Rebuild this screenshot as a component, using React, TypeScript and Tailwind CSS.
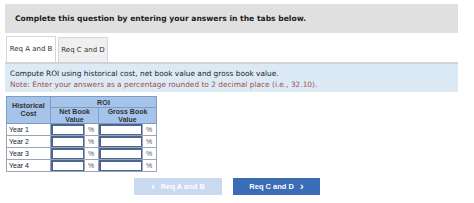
import React from "react";

const rows = ["Year 1", "Year 2", "Year 3", "Year 4"];

export default function App() {
  return (
    <div className="h-[203px] w-[474px] bg-white font-['DejaVu_Sans',sans-serif]">
      <div className="px-[5px] pt-[4px]">
        <div className="flex h-[29px] w-[453px] items-center bg-[#e0e0e0] pl-[10px] text-[7.6px] font-bold text-[#222]">
          Complete this question by entering your answers in the tabs below.
        </div>

        <div className="mt-[3px] flex h-[26px] items-end gap-[2px] pl-px">
          <div className="flex h-[26px] w-[50px] items-center justify-center border border-b-0 border-[#d6d6d6] bg-white text-[7px] text-[#333]">
            Req A and B
          </div>
          <div className="flex h-[25px] w-[50px] items-center justify-center border border-b-0 border-[#d6d6d6] bg-[#f0f0f0] text-[7px] text-[#333]">
            Req C and D
          </div>
        </div>

        <div className="h-[30px] w-[453px] border-t-2 border-[#cfd4d9] bg-[#dceaf6] pl-[5px] pt-[4px] text-[7.4px] leading-[11px]">
          <div className="text-[#222]">Compute ROI using historical cost, net book value and gross book value.</div>
          <div className="text-[#a0504a]">Note: Enter your answers as a percentage rounded to 2 decimal place (i.e., 32.10).</div>
        </div>

        <table className="mt-[4px] ml-px border-collapse font-['Liberation_Sans',sans-serif] text-[7px] text-[#222]">
          <thead>
            <tr className="h-[11px]">
              <th rowSpan={2} className="w-[44px] border border-[#7f9cc6] bg-[#a6c4ea] text-[7.2px] font-bold leading-[8px] text-[#333]">
                Historical
                <br />
                Cost
              </th>
              <th colSpan={4} className="border border-[#7f9cc6] bg-[#a6c4ea] text-[7.2px] font-bold leading-[9px] text-[#333]">
                ROI
              </th>
            </tr>
            <tr className="h-[14px]">
              <th colSpan={2} className="border border-[#7f9cc6] bg-[#a6c4ea] text-[7px] font-bold leading-[7.5px] text-[#333]">
                Net Book
                <br />
                Value
              </th>
              <th colSpan={2} className="border border-[#7f9cc6] bg-[#a6c4ea] text-[7px] font-bold leading-[7.5px] text-[#333]">
                Gross Book
                <br />
                Value
              </th>
            </tr>
          </thead>
          <tbody>
            {rows.map((r) => (
              <tr key={r} className="h-[12px]">
                <td className="border border-[#9aa6b8] pl-[2px] leading-[10px]">{r}</td>
                <td className="w-[34px] border border-[#9aa6b8] p-0">
                  <div className="h-[11px] border border-t-2 border-l-2 border-[#4d6591] bg-white" />
                </td>
                <td className="w-[14px] border border-[#9aa6b8] pl-[3px] text-[7px] leading-[10px] text-[#555]">%</td>
                <td className="w-[44px] border border-[#9aa6b8] p-0">
                  <div className="h-[11px] border border-t-2 border-l-2 border-[#4d6591] bg-white" />
                </td>
                <td className="w-[14px] border border-[#9aa6b8] pl-[3px] text-[7px] leading-[10px] text-[#555]">%</td>
              </tr>
            ))}
          </tbody>
        </table>

        <div className="mt-[6px] flex gap-[11px] pl-[129px] font-['Liberation_Sans',sans-serif] text-[7.5px] font-bold">
          <div className="flex h-[17px] w-[88px] items-center justify-center gap-[6px] bg-[#c9daf0] text-white">
            <span className="text-[11px] leading-none">&lsaquo;</span>
            <span>Req A and B</span>
          </div>
          <div className="flex h-[17px] w-[87px] items-center justify-center gap-[6px] bg-[#3a6db5] text-white">
            <span>Req C and D</span>
            <span className="text-[11px] leading-none">&rsaquo;</span>
          </div>
        </div>
      </div>
    </div>
  );
}
